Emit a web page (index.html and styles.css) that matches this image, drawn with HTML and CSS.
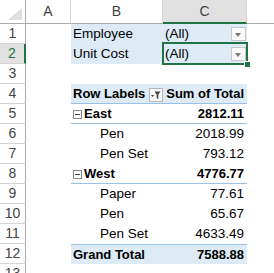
FILE: index.html
```html
<!DOCTYPE html>
<html lang="en">
<head>
  <meta charset="UTF-8">
  <meta name="viewport" content="width=device-width, initial-scale=1.0">
  <title>Pivot Table</title>
  <link rel="stylesheet" href="styles.css">
</head>
<body>
  <div class="sheet">
    <!-- column headers -->
    <div class="corner"><span class="corner-tri"></span></div>
    <div class="colhead">A</div>
    <div class="colhead">B</div>
    <div class="colhead colhead-sel">C</div>
    <div class="colhead colhead-last"></div>

    <!-- row 1 -->
    <div class="rowhead">1</div>
    <div class="cell"></div>
    <div class="cell pv-page">Employee</div>
    <div class="cell pv-page">(All)<span class="dd"></span></div>
    <div class="cell"></div>

    <!-- row 2 -->
    <div class="rowhead rowhead-sel">2</div>
    <div class="cell"></div>
    <div class="cell pv-page">Unit Cost</div>
    <div class="cell pv-page active">(All)<span class="dd"></span></div>
    <div class="cell"></div>

    <!-- row 3 -->
    <div class="rowhead">3</div>
    <div class="cell"></div>
    <div class="cell"></div>
    <div class="cell"></div>
    <div class="cell"></div>

    <!-- row 4 -->
    <div class="rowhead">4</div>
    <div class="cell"></div>
    <div class="cell pv-head">Row Labels
      <svg class="filter-btn" width="14" height="14" viewBox="0 0 14 14">
        <rect x="0.5" y="0.5" width="13" height="13" fill="#f7f7f7" stroke="#b7b7b7"/>
        <path d="M2 7h3L3.5 9z" fill="#444"/>
        <path d="M5.5 3.5h6L9.3 6.5V11L7.7 10V6.5z" fill="#444"/>
      </svg>
    </div>
    <div class="cell pv-head num">Sum of Total</div>
    <div class="cell"></div>

    <!-- row 5 -->
    <div class="rowhead">5</div>
    <div class="cell"></div>
    <div class="cell pv-group"><span class="toggle"></span>East</div>
    <div class="cell pv-group num">2812.11</div>
    <div class="cell"></div>

    <!-- row 6 -->
    <div class="rowhead">6</div>
    <div class="cell"></div>
    <div class="cell pv-item">Pen</div>
    <div class="cell pv-val num">2018.99</div>
    <div class="cell"></div>

    <!-- row 7 -->
    <div class="rowhead">7</div>
    <div class="cell"></div>
    <div class="cell pv-item">Pen Set</div>
    <div class="cell pv-val num">793.12</div>
    <div class="cell"></div>

    <!-- row 8 -->
    <div class="rowhead">8</div>
    <div class="cell"></div>
    <div class="cell pv-group"><span class="toggle"></span>West</div>
    <div class="cell pv-group num">4776.77</div>
    <div class="cell"></div>

    <!-- row 9 -->
    <div class="rowhead">9</div>
    <div class="cell"></div>
    <div class="cell pv-item">Paper</div>
    <div class="cell pv-val num">77.61</div>
    <div class="cell"></div>

    <!-- row 10 -->
    <div class="rowhead">10</div>
    <div class="cell"></div>
    <div class="cell pv-item">Pen</div>
    <div class="cell pv-val num">65.67</div>
    <div class="cell"></div>

    <!-- row 11 -->
    <div class="rowhead">11</div>
    <div class="cell"></div>
    <div class="cell pv-item">Pen Set</div>
    <div class="cell pv-val num">4633.49</div>
    <div class="cell"></div>

    <!-- row 12 -->
    <div class="rowhead">12</div>
    <div class="cell"></div>
    <div class="cell pv-total">Grand Total</div>
    <div class="cell pv-total num">7588.88</div>
    <div class="cell"></div>

    <!-- row 13 -->
    <div class="rowhead">13</div>
    <div class="cell"></div>
    <div class="cell"></div>
    <div class="cell"></div>
    <div class="cell"></div>
  </div>
</body>
</html>
```

FILE: styles.css
```css
html, body {
  margin: 0;
  padding: 0;
  background: #ffffff;
  overflow: hidden;
}
.sheet {
  display: grid;
  grid-template-columns: 26px 45px 92px 84px 27px;
  grid-template-rows: 24px repeat(13, 20px);
  font-family: "Liberation Sans", Arial, sans-serif;
  font-size: 13.5px;
  color: #000;
}
.sheet > div {
  box-sizing: border-box;
  white-space: nowrap;
  overflow: visible;
}

/* headers */
.corner {
  position: relative;
  border-right: 1px solid #ababab;
  border-bottom: 1px solid #ababab;
}
.corner-tri {
  position: absolute;
  right: 3px;
  bottom: 3px;
  width: 0;
  height: 0;
  border-left: 14px solid transparent;
  border-bottom: 12px solid #dfdfdf;
}
.colhead {
  border-right: 1px solid #d4d4d4;
  border-bottom: 1px solid #ababab;
  color: #444;
  text-align: center;
  line-height: 23px;
  font-size: 14px;
}
.colhead-sel {
  background: #e1e1e1;
  border-bottom: 2px solid #217346;
  color: #444;
}
.colhead-last {
  border-right: none;
}
.rowhead {
  border-right: 1px solid #ababab;
  border-bottom: 1px solid #d4d4d4;
  color: #444;
  text-align: center;
  line-height: 19px;
  font-size: 14px;
}
.rowhead-sel {
  background: #e1e1e1;
  border-right: 2px solid #217346;
  color: #217346;
}

/* cells */
.cell {
  line-height: 20px;
  padding: 0 3px 0 2px;
}
.num {
  text-align: right;
}
.pv-page {
  background: #ddebf7;
  position: relative;
}
.dd {
  position: absolute;
  right: 1px;
  top: 3px;
  width: 15px;
  height: 14px;
  box-sizing: border-box;
  border: 1px solid #c8c8c8;
  background: #fafafa;
}
.dd::after {
  content: "";
  position: absolute;
  left: 3px;
  top: 5px;
  border-left: 3.5px solid transparent;
  border-right: 3.5px solid transparent;
  border-top: 4px solid #7a7a7a;
}
.active::before {
  content: "";
  position: absolute;
  left: -1px;
  top: -2px;
  right: -1px;
  bottom: -1px;
  border: 2px solid #217346;
  pointer-events: none;
}
.active::after {
  content: "";
  position: absolute;
  right: -4px;
  bottom: -4px;
  width: 5px;
  height: 5px;
  background: #217346;
  border: 1px solid #fff;
}
.pv-head {
  background: #ddebf7;
  border-bottom: 1px solid #9bc2e6;
  font-weight: bold;
  font-size: 13px;
  position: relative;
}
.filter-btn {
  position: absolute;
  right: 0;
  top: 4px;
}
.pv-group {
  font-weight: bold;
  font-size: 13px;
  border-bottom: 1px solid #9bc2e6;
}
.toggle {
  display: inline-block;
  position: relative;
  width: 9px;
  height: 9px;
  box-sizing: border-box;
  border: 1px solid #8a8a8a;
  margin-right: 2px;
  vertical-align: -1px;
}
.toggle::after {
  content: "";
  position: absolute;
  left: 1px;
  right: 1px;
  top: 3px;
  height: 1px;
  background: #444;
}
.pv-item {
  padding-left: 29px;
}
.pv-total {
  background: #ddebf7;
  border-top: 1px solid #9bc2e6;
  font-weight: bold;
  font-size: 13px;
  line-height: 19px;
}
```
